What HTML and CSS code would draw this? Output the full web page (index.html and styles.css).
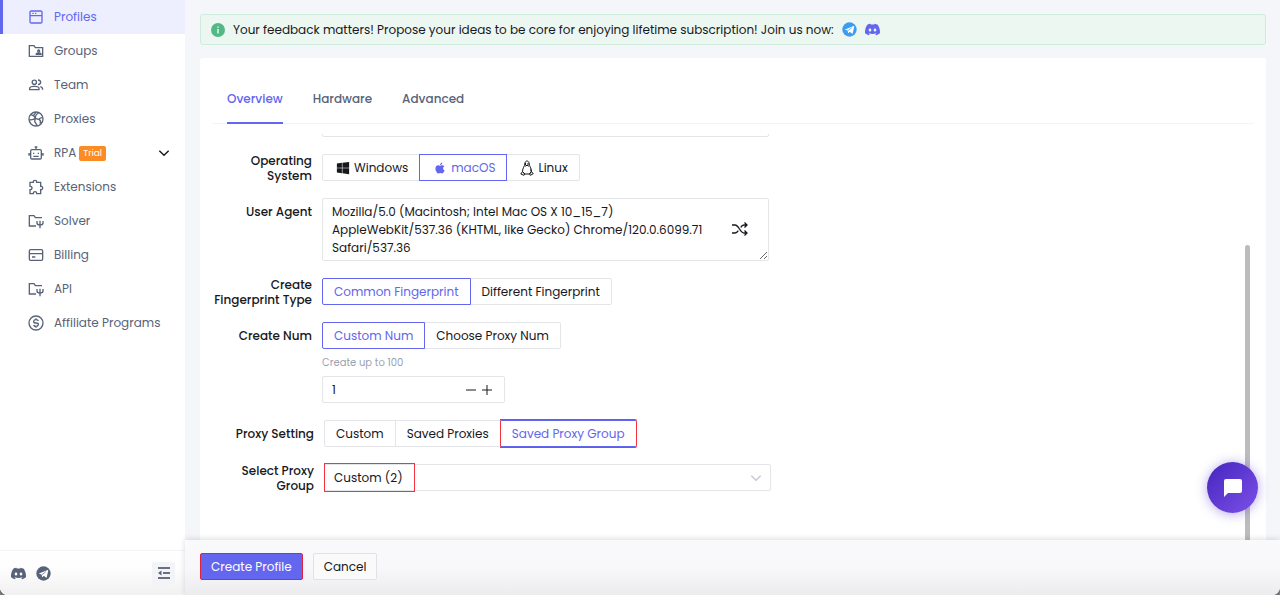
FILE: index.html
```
<!DOCTYPE html>
<html lang="en">
<head>
    <meta charset="UTF-8" />
    <meta name="viewport" content="width=device-width, initial-scale=1.0" />
    <title>Create Profile</title>
    <link rel="stylesheet" href="styles.css">
</head>
<body>
    <!-- Shared icons -->
    <svg class="sprite" aria-hidden="true">
        <symbol id="discord" viewBox="0 0 24 24"><path fill="currentColor" d="M20.317 4.3698a19.7913 19.7913 0 00-4.8851-1.5152.0741.0741 0 00-.0785.0371c-.211.3753-.4447.8648-.6083 1.2495-1.8447-.2762-3.68-.2762-5.4868 0-.1636-.3933-.4058-.8742-.6177-1.2495a.077.077 0 00-.0785-.037 19.7363 19.7363 0 00-4.8852 1.515.0699.0699 0 00-.0321.0277C.5334 9.0458-.319 13.5799.0992 18.0578a.0824.0824 0 00.0312.0561c2.0528 1.5076 4.0413 2.4228 5.9929 3.0294a.0777.0777 0 00.0842-.0276c.4616-.6304.8731-1.2952 1.226-1.9942a.076.076 0 00-.0416-.1057c-.6528-.2476-1.2743-.5495-1.8722-.8923a.077.077 0 01-.0076-.1277c.1258-.0943.2517-.1923.3718-.2914a.0743.0743 0 01.0776-.0105c3.9278 1.7933 8.18 1.7933 12.0614 0a.0739.0739 0 01.0785.0095c.1202.099.246.1981.3728.2924a.077.077 0 01-.0066.1276 12.2986 12.2986 0 01-1.873.8914.0766.0766 0 00-.0407.1067c.3604.698.7719 1.3628 1.225 1.9932a.076.076 0 00.0842.0286c1.961-.6067 3.9495-1.5219 6.0023-3.0294a.077.077 0 00.0313-.0552c.5004-5.177-.8382-9.6739-3.5485-13.6604a.061.061 0 00-.0312-.0286zM8.02 15.3312c-1.1825 0-2.1569-1.0857-2.1569-2.419 0-1.3332.9555-2.4189 2.157-2.4189 1.2108 0 2.1757 1.0952 2.1568 2.419 0 1.3332-.9555 2.4189-2.1569 2.4189zm7.9748 0c-1.1825 0-2.1569-1.0857-2.1569-2.419 0-1.3332.9554-2.4189 2.1569-2.4189 1.2108 0 2.1757 1.0952 2.1568 2.419 0 1.3332-.946 2.4189-2.1568 2.4189Z"/></symbol>
        <symbol id="telegram" viewBox="0 0 24 24"><circle cx="12" cy="12" r="11.500" fill="currentColor"/><path fill="#fff" d="M4.800 11.800 18.600 6.400c.7-.2 1.100.2.9 1l-2.300 10.400c-.2.8-.7 1-1.300.6l-3.600-2.700-1.800 1.800c-.4.4-.8.2-.9-.3L9 13.600l-4.100-1.200c-.6-.2-.6-.4-.1-.6z"/><path fill="none" stroke="currentColor" stroke-width="1.100" d="m9.300 14 6.500-5"/></symbol>
        <symbol id="folder-branch" viewBox="0 0 24 24"><path d="M12 19.500H2V4h7l2 3h10"/><path d="M18 11.500V23M13.500 12v3q0 3 4.500 3t4.500-3v-3"/></symbol>
    </svg>

    <div class="app">
        <aside class="sidebar">
            <nav class="menu">
                <a class="menu-item active" href="#">
                    <svg class="icon" viewBox="0 0 24 24"><rect x="3" y="3" width="18" height="18" rx="2"/><path d="M3 10h18M6.500 6.500h2M10.500 6.500h2"/></svg>
                    Profiles
                </a>
                <a class="menu-item" href="#">
                    <svg class="icon" viewBox="0 0 24 24"><path d="M2 4h7l2 3h11v13H2z"/><circle cx="16" cy="12" r="1.500"/><path d="M12.500 17v-1q3.500-2 7 0v1z"/></svg>
                    Groups
                </a>
                <a class="menu-item" href="#">
                    <svg class="icon" viewBox="0 0 24 24"><circle cx="9.500" cy="8" r="3.200"/><path d="M2.500 19v-2q0-3 7-3t7 3v2zM15 4.500q4 .5 4 3.500t-4 3.500M18.500 14.500q3.500 1 3.500 4.500"/></svg>
                    Team
                </a>
                <a class="menu-item" href="#">
                    <svg class="icon" viewBox="0 0 24 24"><circle cx="12" cy="12" r="10.500"/><path d="M4.500 5.500Q10 7 11 11q-4 3-9 2M11 11q0-6 5-8M8.500 6.500 12 2M11 11l6 2q3 2 1 6M11 11l-1 5 4 6M17 13q0-3 5-3"/></svg>
                    Proxies
                </a>
                <a class="menu-item" href="#">
                    <svg class="icon" viewBox="0 0 24 24"><rect x="4" y="7" width="16" height="14" rx="2"/><path d="M12 7V3M10 3h4M1.500 12v4M22.500 12v4M1.500 14H4M20 14h2.500M8.500 11.500v2M15.500 11.500v2M8 17h8"/></svg>
                    RPA <span class="tag">Trial</span>
                    <svg class="chevron" viewBox="0 0 12 12"><path d="m2 4 4 4 4-4"/></svg>
                </a>
                <a class="menu-item" href="#">
                    <svg class="icon" viewBox="0 0 24 24"><path d="M3 5h5c-1-4 6-4 5 0h6v6c4-1 4 6 0 5v6h-6c0-4-5-4-5 0H3v-6c4 0 4-5 0-5z"/></svg>
                    Extensions
                </a>
                <a class="menu-item" href="#">
                    <svg class="icon"><use href="#folder-branch"/></svg>
                    Solver
                </a>
                <a class="menu-item" href="#">
                    <svg class="icon" viewBox="0 0 24 24"><rect x="2" y="4" width="20" height="16" rx="2"/><path d="M2 10h20M6 15h5"/></svg>
                    Billing
                </a>
                <a class="menu-item" href="#">
                    <svg class="icon"><use href="#folder-branch"/></svg>
                    API
                </a>
                <a class="menu-item" href="#">
                    <svg class="icon" viewBox="0 0 24 24"><circle cx="12" cy="12" r="10.500"/><path d="M15.500 9q-.5-2-3.500-2t-3.500 2.500 3.500 2.500 3.500 2.500-3.500 2.500-3.500-2M12 5v2M12 17v2"/></svg>
                    Affiliate Programs
                </a>
            </nav>
            <div class="sidebar-footer">
                <a href="#" aria-label="Discord"><svg class="social"><use href="#discord"/></svg></a>
                <a href="#" aria-label="Telegram"><svg class="social"><use href="#telegram"/></svg></a>
                <button class="collapse" type="button" aria-label="Collapse menu">
                    <svg viewBox="0 0 14 12"><path d="M1 1h12M6 6h7M1 11h12"/><path class="solid" d="M4.500 3.500v5L1 6z"/></svg>
                </button>
            </div>
        </aside>

        <div class="page">
            <main class="content">
                <div class="alert">
                    <svg class="info" viewBox="0 0 14 14"><circle class="solid" cx="7" cy="7" r="7"/><path d="M7 6v4.500M7 3.500v1.300" stroke="#fff" stroke-width="1.300"/></svg>
                    <span>Your feedback matters! Propose your ideas to be core for enjoying lifetime subscription! Join us now:</span>
                    <a class="tg" href="#" aria-label="Telegram"><svg class="social"><use href="#telegram"/></svg></a>
                    <a class="dc" href="#" aria-label="Discord"><svg class="social"><use href="#discord"/></svg></a>
                </div>

                <section class="card">
                    <nav class="tabs">
                        <a class="tab active" href="#">Overview</a>
                        <a class="tab" href="#">Hardware</a>
                        <a class="tab" href="#">Advanced</a>
                    </nav>

                    <form class="form" id="profileForm">
                        <div class="row scrolled">
                            <span class="label"></span>
                            <input class="field" type="text" aria-label="Remark" />
                        </div>

                        <div class="row">
                            <span class="label" id="osLabel">Operating System</span>
                            <div class="segmented" role="radiogroup" aria-labelledby="osLabel">
                                <label><input type="radio" name="os" />
                                    <svg class="os" viewBox="-16 0 480 512"><path fill="currentColor" d="M0 93.700l183.600-25.300v177.400H0V93.700zm0 324.600l183.600 25.300V268.400H0v149.900zm203.800 28L448 480V268.400H203.800v177.900zm0-380.600v180.100H448V32L203.800 65.700z"/></svg>
                                    Windows</label>
                                <label><input type="radio" name="os" checked />
                                    <svg class="os" viewBox="-32 -32 448 576"><path fill="currentColor" d="M318.700 268.700c-.2-36.700 16.400-64.400 50-84.800-18.800-26.900-47.200-41.700-84.700-44.600-35.500-2.800-74.300 20.700-88.500 20.700-15 0-49.400-19.700-76.400-19.700C63.300 141.200 4 184.800 4 273.500q0 39.300 14.400 81.200c12.800 36.700 59 126.700 107.200 125.200 25.200-.6 43-17.900 75.800-17.900 31.800 0 48.300 17.900 76.400 17.900 48.600-.7 90.400-82.500 102.600-119.300-65.200-30.700-61.700-90-61.700-91.900zm-56.600-164.200c27.300-32.400 24.800-61.900 24-72.500-24.100 1.400-52 16.400-67.900 34.900-17.500 19.800-27.800 44.300-25.600 71.900 26.100 2 49.900-11.400 69.500-34.300z"/></svg>
                                    macOS</label>
                                <label><input type="radio" name="os" />
                                    <svg class="tux" viewBox="0 0 14 16"><path d="M4.800 4C4.800 0 9.200 0 9.200 4c0 2 2.300 4 2.300 7.500L9.500 14h-5l-2-2.500C2.500 8 4.800 6 4.800 4zM5 6.500C6 5 8 5 9 6.500"/><path d="M2.500 11.500.8 14l3.200 1.300 1-1.300zM11.500 11.500l1.700 2.300-3 1.500-.7-1.300z"/><path class="solid" d="M5 3h1v2H5zM7.500 3h1v2h-1zM10 8l1.700 3-1 1z"/></svg>
                                    Linux</label>
                            </div>
                        </div>

                        <div class="row">
                            <label class="label" for="userAgent">User Agent</label>
                            <div class="agent">
                                <textarea id="userAgent" class="field" rows="3" spellcheck="false">Mozilla/5.0 (Macintosh; Intel Mac OS X 10_15_7) AppleWebKit/537.36 (KHTML, like Gecko) Chrome/120.0.6099.71 Safari/537.36</textarea>
                                <button class="shuffle" type="button" aria-label="Random user agent">
                                    <svg viewBox="0 0 16 14"><path d="M0 3h3c4 0 5 8 9 8h3M0 11h3c1.500 0 2.500-1 3.300-2.300M8.700 5.300C9.500 4 10.500 3 12 3h3M12.500.5 15 3l-2.500 2.500M12.500 8.500 15 11l-2.500 2.500"/></svg>
                                </button>
                            </div>
                        </div>

                        <div class="row">
                            <span class="label" id="fpLabel">Create Fingerprint Type</span>
                            <div class="segmented" role="radiogroup" aria-labelledby="fpLabel">
                                <label><input type="radio" name="fp" checked />Common Fingerprint</label>
                                <label><input type="radio" name="fp" />Different Fingerprint</label>
                            </div>
                        </div>

                        <div class="row">
                            <span class="label" id="numLabel">Create Num</span>
                            <div>
                                <div class="segmented" role="radiogroup" aria-labelledby="numLabel">
                                    <label><input type="radio" name="num" checked />Custom Num</label>
                                    <label><input type="radio" name="num" />Choose Proxy Num</label>
                                </div>
                                <label class="hint" for="count">Create up to 100</label>
                                <div class="stepper">
                                    <input id="count" type="text" inputmode="numeric" value="1" />
                                    <button type="button" aria-label="Decrease"><svg viewBox="0 0 10 10"><path d="M0 5h10"/></svg></button>
                                    <button type="button" aria-label="Increase"><svg viewBox="0 0 10 10"><path d="M0 5h10M5 0v10"/></svg></button>
                                </div>
                            </div>
                        </div>

                        <div class="proxy">
                            <div class="row">
                                <span class="label" id="proxyLabel">Proxy Setting</span>
                                <div class="segmented" role="radiogroup" aria-labelledby="proxyLabel">
                                    <label><input type="radio" name="proxy" />Custom</label>
                                    <label><input type="radio" name="proxy" />Saved Proxies</label>
                                    <label class="marked"><input type="radio" name="proxy" checked />Saved Proxy Group</label>
                                </div>
                            </div>

                            <div class="row">
                                <label class="label" for="proxyGroup">Select Proxy Group</label>
                                <div class="select">
                                    <select id="proxyGroup" class="field">
                                        <option>Custom (2)</option>
                                    </select>
                                    <svg class="chevron" viewBox="0 0 12 12"><path d="m2 4 4 4 4-4"/></svg>
                                    <span class="marker"></span>
                                </div>
                            </div>
                        </div>
                    </form>
                    <div class="scrollbar"></div>
                </section>
            </main>

            <footer class="actions">
                <button class="btn primary" type="submit" form="profileForm">Create Profile</button>
                <button class="btn" type="button">Cancel</button>
            </footer>
        </div>
    </div>

    <button class="chat" type="button" aria-label="Open chat">
        <svg viewBox="0 0 18 18"><path d="M2 0h14a2 2 0 0 1 2 2v10a2 2 0 0 1-2 2H4l-4 4V2a2 2 0 0 1 2-2z"/></svg>
    </button>
</body>
</html>
```
FILE: styles.css
```
* {
    box-sizing: border-box;
}

html {
    background-color: #77747a;
}

body {
    margin: 0;
    font-family: Poppins, Inter, "Liberation Sans", sans-serif;
    font-size: 12px;
    line-height: 18px;
    color: #17181c;
}

button, input, select, textarea {
    font: inherit;
    color: inherit;
}

button {
    padding: 0;
    cursor: pointer;
}

a {
    color: inherit;
    text-decoration: none;
}

svg {
    display: block;
    flex: none;
    fill: none;
    stroke: currentColor;
}

.sprite {
    position: absolute;
    width: 0;
    height: 0;
}

.app {
    display: flex;
    height: 100vh;
    background-color: #f5f6f9;
    border-radius: 0 0 8px 8px;
    overflow: hidden;
}

/* Sidebar */
.sidebar {
    width: 185px;
    flex: none;
    display: flex;
    flex-direction: column;
    background-color: #fff;
    color: #586379;
}

.menu {
    flex: 1;
}

.menu-item {
    display: flex;
    align-items: center;
    height: 34px;
    padding: 0 14px 0 28px;
    white-space: nowrap;
}

.menu-item.active {
    color: #6366ee;
    background-color: #eeeffe;
    box-shadow: inset 3px 0 0 #6366ee;
}

.icon {
    width: 16px;
    height: 16px;
    margin-right: 10px;
    stroke-width: 2;
}

.tag {
    margin-left: 3px;
    padding: 0 4px;
    border-radius: 2px;
    background-color: #fb8c24;
    color: #fff;
    font-size: 9px;
    line-height: 15px;
}

.chevron {
    width: 14px;
    height: 14px;
    stroke-width: 1.2;
}

.menu-item .chevron {
    margin-left: auto;
    color: #17181c;
}

.sidebar-footer {
    display: flex;
    align-items: center;
    gap: 10px;
    height: 45px;
    padding: 0 10px 0 11px;
    border-top: 1px solid #f1f2f4;
    background: linear-gradient(#fff, #fdfdfd 40%, #f1f1f2);
}

.social {
    width: 15px;
    height: 15px;
    stroke: none;
}

.collapse {
    display: flex;
    align-items: center;
    justify-content: center;
    width: 23px;
    height: 23px;
    margin-left: auto;
    border: 0;
    border-radius: 2px;
    background-color: #f3f4f7;
}

.collapse svg {
    width: 14px;
    stroke: #3c465a;
    stroke-width: 1.5;
}

.solid {
    fill: currentColor;
    stroke: none;
}

/* Page */
.page {
    flex: 1;
    min-width: 0;
    display: flex;
    flex-direction: column;
}

.content {
    flex: 1;
    min-height: 0;
    display: flex;
    flex-direction: column;
    gap: 13px;
    padding: 14px 14px 0 15px;
}

.alert {
    display: flex;
    align-items: center;
    height: 31px;
    padding: 0 10px;
    border: 1px solid #cdecdc;
    border-radius: 3px;
    background-color: #edf7f2;
}

.info {
    width: 14px;
    height: 14px;
    margin-right: 8px;
    color: #52b986;
}

.alert a {
    margin-left: 8px;
}

.tg {
    color: #3b9cf3;
}

.dc {
    color: #6366ee;
}

.card {
    position: relative;
    flex: 1;
    min-height: 0;
    display: flex;
    flex-direction: column;
    padding: 0 12px;
    border-radius: 3px 3px 0 0;
    background-color: #fff;
}

.tabs {
    display: flex;
    gap: 30px;
    height: 66px;
    flex: none;
    padding: 0 15px;
    border-bottom: 1px solid #f3f4f6;
    color: #586379;
    font-weight: 500;
}

.tab {
    margin-bottom: -1px;
    padding-top: 32px;
}

.tab.active {
    color: #6366ee;
    box-shadow: inset 0 -2px 0 #6366ee;
}

/* Form */
.form {
    flex: 1;
    min-height: 0;
    margin-top: 10px;
    overflow: hidden;
}

.row {
    display: flex;
    gap: 10px;
    margin-bottom: 17px;
}

.scrolled {
    margin-top: -24px;
}

.label {
    display: flex;
    align-items: center;
    justify-content: flex-end;
    width: 100px;
    height: 27px;
    flex: none;
    line-height: 15px;
    font-weight: 500;
    text-align: right;
}

.proxy .label {
    width: 102px;
    padding-left: 20px;
}

.field {
    display: block;
    width: 447px;
    height: 27px;
    padding: 0 9px;
    border: 1px solid #e4e5e8;
    border-radius: 2px;
    background-color: #fff;
    outline: none;
}

.segmented {
    display: flex;
}

.segmented label {
    display: flex;
    align-items: center;
    height: 27px;
    margin-left: -1px;
    padding: 0 11px;
    border: 1px solid #e4e5e8;
    white-space: nowrap;
    cursor: pointer;
}

.segmented label:first-child {
    margin-left: 0;
    border-radius: 2px 0 0 2px;
}

.segmented label:last-child {
    border-radius: 0 2px 2px 0;
}

.segmented input {
    position: absolute;
    opacity: 0;
    pointer-events: none;
}

.segmented label:has(:checked) {
    position: relative;
    border-color: #6366ee;
    color: #6366ee;
}

.segmented label.marked:has(:checked) {
    border-right-color: #f5333f;
    border-left-color: #f5333f;
    box-shadow: 0 -1px 0 #f5333f, 0 1px 0 #f5333f;
}

.os, .tux {
    width: 14px;
    height: 14px;
    margin: 0 4px 0 2px;
    stroke: none;
}

.tux {
    height: 16px;
    stroke: currentColor;
}

.agent, .select {
    position: relative;
}

textarea.field {
    height: 63px;
    padding: 4px 60px 4px 9px;
    overflow: hidden;
    resize: both;
}

.shuffle {
    position: absolute;
    top: 24px;
    right: 21px;
    border: 0;
    background: none;
}

.shuffle svg {
    width: 16px;
    height: 14px;
    stroke-width: 1.3;
}

.hint {
    display: block;
    height: 27px;
    color: #9aa1b0;
    font-size: 10px;
    line-height: 27px;
}

.stepper {
    display: flex;
    align-items: center;
    gap: 6px;
    width: 183px;
    height: 27px;
    padding: 0 12px 0 9px;
    border: 1px solid #e4e5e8;
    border-radius: 2px;
}

.stepper input {
    flex: 1;
    min-width: 0;
    padding: 0;
    border: 0;
    outline: none;
}

.stepper button {
    border: 0;
    background: none;
}

.stepper svg {
    width: 10px;
    height: 10px;
}

select.field {
    appearance: none;
}

.select .chevron {
    position: absolute;
    top: 7px;
    right: 8px;
    color: #c8cacf;
    pointer-events: none;
}

.marker {
    position: absolute;
    inset: -1px auto -1px 0;
    width: 91px;
    border: 1px solid #f5333f;
    pointer-events: none;
}

.scrollbar {
    position: absolute;
    top: 187px;
    right: 16px;
    bottom: 0;
    width: 5px;
    border-radius: 3px 3px 0 0;
    background-color: #bcbcbc;
}

/* Bottom bar */
.actions {
    position: relative;
    display: flex;
    align-items: flex-start;
    gap: 10px;
    height: 55px;
    flex: none;
    padding: 13px 15px 0;
    background: linear-gradient(#fafafc, #f8f8fa 50%, #ececee);
    box-shadow: 0 -1px 6px rgba(0, 0, 0, 0.14);
}

.btn {
    height: 27px;
    padding: 0 10px;
    border: 1px solid #e1e2e5;
    border-radius: 2px;
    background-color: #fafafb;
}

.btn.primary {
    border-color: #e2213f;
    background-color: #6366ee;
    color: #fff;
}

.chat {
    position: fixed;
    right: 22px;
    bottom: 82px;
    display: flex;
    align-items: center;
    justify-content: center;
    width: 51px;
    height: 51px;
    border: 0;
    border-radius: 50%;
    background: linear-gradient(135deg, #4526bd, #7c50e8);
    box-shadow: 0 1px 12px rgba(90, 60, 210, 0.45);
}

.chat svg {
    width: 18px;
    height: 18px;
    fill: #fff;
    stroke: none;
}
```
